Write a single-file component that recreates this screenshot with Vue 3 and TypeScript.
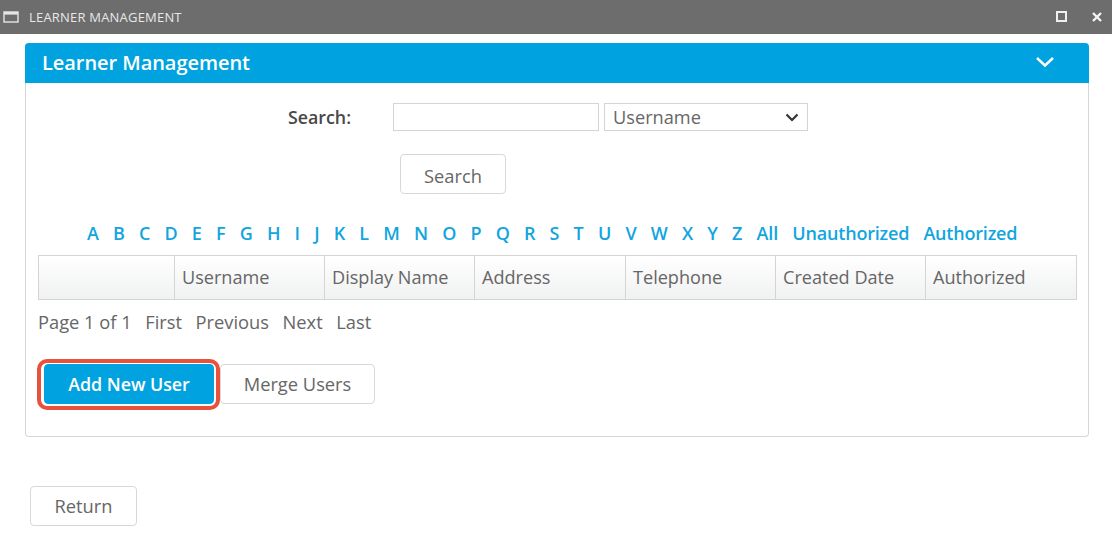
<script setup lang="ts">
const letters: string[] = 'ABCDEFGHIJKLMNOPQRSTUVWXYZ'.split('')
const columns: string[] = ['', 'Username', 'Display Name', 'Address', 'Telephone', 'Created Date', 'Authorized']
const pager: string[] = ['Page 1 of 1', 'First', 'Previous', 'Next', 'Last']
</script>

<template>
  <div class="page">
    <header class="titlebar">
      <svg class="win-icon" width="16" height="12" viewBox="0 0 16 12">
        <rect x="1" y="1" width="14" height="10" fill="none" stroke="#e6e6e6" stroke-width="1.4" />
        <rect x="1" y="1" width="14" height="2.6" fill="#e6e6e6" />
      </svg>
      <span class="wintitle">LEARNER MANAGEMENT</span>
      <svg class="win-max" width="11" height="11" viewBox="0 0 11 11">
        <rect x="1" y="1" width="9" height="9" fill="none" stroke="#efefef" stroke-width="2" />
      </svg>
      <svg class="win-close" width="10" height="10" viewBox="0 0 10 10">
        <path d="M1 1 L9 9 M9 1 L1 9" stroke="#f4f4f4" stroke-width="2.4" fill="none" />
      </svg>
    </header>

    <section class="panel">
      <div class="panel-head">
        <span class="panel-title">Learner Management</span>
        <svg class="chev" width="20" height="12" viewBox="0 0 20 12">
          <path d="M2 2 L10 9.5 L18 2" stroke="#fff" stroke-width="2.4" fill="none" />
        </svg>
      </div>
      <div class="panel-body">
        <div class="search-row">
          <label class="search-label">Search:</label>
          <input class="search-input" type="text" />
          <div class="select">
            <span>Username</span>
            <svg width="14" height="9" viewBox="0 0 14 9">
              <path d="M1.5 1.5 L7 7 L12.5 1.5" stroke="#333" stroke-width="2.2" fill="none" />
            </svg>
          </div>
        </div>
        <div class="search-action">
          <button class="btn search-btn">Search</button>
        </div>
        <nav class="letters">
          <a v-for="l in letters" :key="l">{{ l }}</a>
          <a>All</a>
          <a class="word">Unauthorized</a>
          <a class="word">Authorized</a>
        </nav>
        <div class="table">
          <div v-for="(c, i) in columns" :key="i" class="th">{{ c }}</div>
        </div>
        <div class="pager">
          <span v-for="p in pager" :key="p">{{ p }}</span>
        </div>
        <div class="actions">
          <button class="btn primary">Add New User</button>
          <button class="btn merge">Merge Users</button>
        </div>
      </div>
    </section>

    <button class="btn return">Return</button>
  </div>
</template>

<style>
html, body { margin: 0; background: #fff; }
</style>

<style scoped>
.page {
  width: 1112px;
  height: 547px;
  overflow: hidden;
  font-family: "Open Sans", "Liberation Sans", sans-serif;
  color: #5f5f5f;
  display: flex;
  flex-direction: column;
  align-items: flex-start;
}
.titlebar {
  width: 100%;
  height: 33.5px;
  flex: none;
  background: #6d6d6d;
  display: flex;
  align-items: center;
  box-sizing: border-box;
  padding: 0 10px 0 3px;
}
.win-icon { margin-right: 10px; }
.wintitle { font-size: 13px; color: #e8e8e8; flex: 1; letter-spacing: 0.2px; }
.win-close { margin-left: 25px; }
.panel {
  margin: 9px 0 0 25px;
  width: 1064px;
  height: 394px;
  box-sizing: border-box;
  border: 1px solid #d6d6d6;
  border-top: 0;
  border-radius: 4px;
  flex: none;
}
.panel-head {
  height: 40px;
  margin: 0 -1px;
  background: #00a3e0;
  border-radius: 4px 4px 0 0;
  display: flex;
  align-items: center;
  justify-content: space-between;
  padding: 0 34px 0 17px;
}
.panel-title { color: #fff; font-size: 20px; font-weight: 600; letter-spacing: -0.05px; }
.chev { margin-top: -2px; }
.panel-body { padding: 20.5px 11px 0 12px; }
.search-row { display: flex; align-items: center; height: 28px; }
.search-label {
  margin-left: 250px;
  width: 105px;
  font-size: 17.8px;
  font-weight: 600;
  color: #484848;
}
.search-input {
  width: 206px;
  height: 28px;
  box-sizing: border-box;
  border: 1px solid #d4d4d4;
  padding: 0;
  margin: 0;
  outline: none;
}
.select {
  width: 204px;
  height: 28px;
  margin-left: 5px;
  box-sizing: border-box;
  border: 1px solid #d4d4d4;
  display: flex;
  align-items: center;
  justify-content: space-between;
  padding: 0 8px;
  font-size: 18.2px;
  color: #666;
}
.search-action { margin: 23px 0 0 362px; }
.btn {
  font-family: inherit;
  font-size: 18.3px;
  color: #666;
  background: #fff;
  border: 1px solid #d8d8d8;
  border-radius: 4px;
  height: 40px;
  padding: 0 0 1px;
  box-sizing: border-box;
  display: block;
}
.search-btn { width: 106px; padding: 2px 0 0; }
.letters {
  display: flex;
  align-items: center;
  height: 26px;
  margin-top: 26px;
  padding-left: 49px;
  font-size: 18px;
  font-weight: 600;
  color: #12a5e0;
  gap: 14.22px;
  white-space: nowrap;
  letter-spacing: -0.1px;
}
.letters .word { letter-spacing: -0.2px; }
.table {
  display: grid;
  grid-template-columns: 135px 150px 150px 151px 150px 150px 1fr;
  width: 1039px;
  height: 45px;
  margin-top: 9px;
  box-sizing: border-box;
  border: 1px solid #d4d4d4;
  background: linear-gradient(#fff, #f0f1f1);
}
.th {
  font-size: 18.1px;
  line-height: 43px;
  padding-left: 7px;
  border-left: 1px solid #d4d4d4;
  color: #666;
  white-space: nowrap;
}
.th:first-child { border-left: 0; }
.pager {
  display: flex;
  gap: 13.6px;
  height: 24px;
  line-height: 24px;
  margin-top: 10px;
  font-size: 18.3px;
  color: #666;
}
.actions { display: flex; margin: 30px 0 0 6px; }
.primary {
  width: 170px;
  background: #00a3e0;
  border-color: #00a3e0;
  color: #fff;
  font-size: 17.8px;
  font-weight: 600;
  position: relative;
}
.primary::after {
  content: "";
  position: absolute;
  inset: -6px -7px -7px -8px;
  border: 4px solid #e8523c;
  border-radius: 10px;
}
.merge { width: 155px; margin-left: 6px; }
.return { width: 107px; margin: 49.5px 0 0 30px; flex: none; }
</style>
